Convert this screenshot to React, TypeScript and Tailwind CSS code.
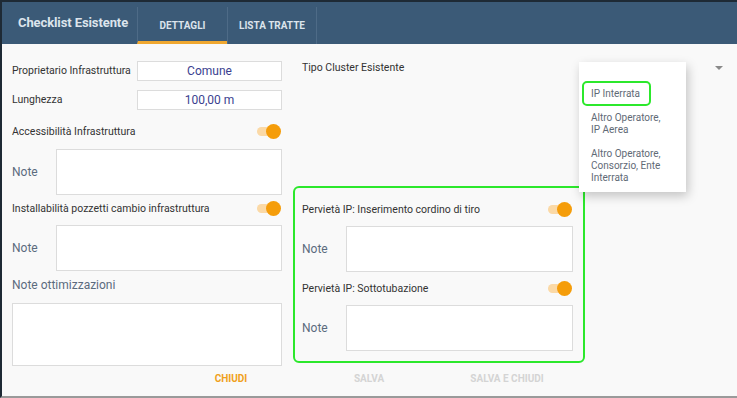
import React from 'react'

const font = { fontFamily: 'Roboto, "Liberation Sans", sans-serif' }

function Toggle() {
  return (
    <div className="relative w-[24px] h-[15px] flex items-center">
      <div className="w-[20px] h-[9px] rounded-full bg-[#fbd9a6]" />
      <div className="absolute right-0 top-0 w-[15px] h-[15px] rounded-full bg-[#f59d0a]" />
    </div>
  )
}

function NoteBox({ h = 'h-[46px]' }: { h?: string }) {
  return (
    <div className="flex items-center">
      <span className="w-[44px] text-[12px] text-[#5b6b7e]">Note</span>
      <div className={`flex-1 ${h} bg-white border-[1.5px] border-[#dcdcdc]`} />
    </div>
  )
}

function ToggleRow({ label }: { label: string }) {
  return (
    <div className="flex items-center justify-between h-[15px] pr-[1px]">
      <span className="text-[10.5px] text-[#333]">{label}</span>
      <Toggle />
    </div>
  )
}

function Field({ label, value }: { label: string; value: string }) {
  return (
    <div className="flex items-center h-[20px]">
      <span className="w-[125px] text-[10.5px] text-[#333]">{label}</span>
      <div className="w-[145px] h-[20px] bg-white border-[1.5px] border-[#dcdcdc] flex items-center justify-center text-[12px] text-[#3b3f8f]">
        {value}
      </div>
    </div>
  )
}

export default function App() {
  return (
    <div className="relative w-[737px] h-[398px] overflow-hidden bg-[#f9f9f9] border-t-2 border-l-2 border-b-2 border-t-[#1e2a35] border-l-[#1e2a35] border-b-[#9a9a9a]" style={font}>
      {/* Header */}
      <div className="h-[42px] bg-[#3b5a77] flex">
        <div className="w-[135px] flex items-center pl-[16px] text-[13px] font-bold text-[#dce4ec] whitespace-nowrap tracking-[-0.1px]">
          Checklist Esistente
        </div>
        <div className="flex items-stretch pt-[5px]">
          <div className="w-[90px] border-l border-[#4e6b87] flex items-center justify-center text-[10px] font-bold text-[#dce4ec] border-b-[3px] border-b-[#f0a830] pt-[3px]">
            DETTAGLI
          </div>
          <div className="w-[89px] border-l border-[#4e6b87] flex items-center justify-center text-[10px] font-bold text-[#dce4ec]">
            LISTA TRATTE
          </div>
          <div className="border-l border-[#4e6b87]" />
        </div>
      </div>

      {/* Body */}
      <div className="flex pl-[10px] pt-[17px]">
        {/* Left column */}
        <div className="w-[270px] flex flex-col">
          <Field label="Proprietario Infrastruttura" value="Comune" />
          <div className="h-[9px]" />
          <Field label="Lunghezza" value="100,00 m" />
          <div className="h-[14px]" />
          <ToggleRow label="Accessibilità Infrastruttura" />
          <div className="h-[10px]" />
          <NoteBox />
          <div className="h-[6px]" />
          <ToggleRow label="Installabilità pozzetti cambio infrastruttura" />
          <div className="h-[9px]" />
          <NoteBox />
          <div className="h-[7px]" />
          <div className="text-[12px] text-[#5b6b7e] h-[15px] leading-[15px]">Note ottimizzazioni</div>
          <div className="h-[10px]" />
          <div className="h-[63px] bg-white border-[1.5px] border-[#dcdcdc]" />
        </div>

        {/* Right column */}
        <div className="flex-1 pl-[11px] flex flex-col">
          <div className="flex items-center h-[16px] pl-[9px] pr-[14px] mt-[-1px]">
            <span className="text-[10.5px] text-[#333] flex-1">Tipo Cluster Esistente</span>
            <span className="w-0 h-0 border-l-[4px] border-r-[4px] border-t-[4px] border-l-transparent border-r-transparent border-t-[#8a8a8a]" />
          </div>
          <div className="h-[110px]" />
          <div className="w-[292px] h-[177px] border-[2.5px] border-[#2ce82c] rounded-[6px] pl-[7px] pr-[10px] pt-[14px] flex flex-col">
            <ToggleRow label="Pervietà IP: Inserimento cordino di tiro" />
            <div className="h-[9px]" />
            <NoteBox />
            <div className="h-[9px]" />
            <ToggleRow label="Pervietà IP: Sottotubazione" />
            <div className="h-[9px]" />
            <NoteBox />
          </div>
        </div>
      </div>

      {/* Footer */}
      <div className="flex pl-[160px] pt-[5px] text-[10px] font-bold">
        <div className="w-[138px] text-center text-[#f0a020]">CHIUDI</div>
        <div className="w-[138px] text-center text-[#d4d4d4]">SALVA</div>
        <div className="w-[138px] text-center text-[#d4d4d4]">SALVA E CHIUDI</div>
      </div>

      {/* Dropdown menu */}
      <div className="absolute left-[577px] top-[60px] w-[107px] h-[130px] bg-white shadow-[2px_4px_10px_rgba(0,0,0,0.22)] text-[10px] leading-[12px] text-[#5f6a76]">
        <div className="mt-[19px] ml-[3px] w-[69px] h-[25px] border-[2.5px] border-[#2ce82c] rounded-[5px] flex items-center pl-[7px]">
          IP Interrata
        </div>
        <div className="mt-[6px] pl-[12px]">
          Altro Operatore,
          <br />
          IP Aerea
        </div>
        <div className="mt-[12px] pl-[12px]">
          Altro Operatore,
          <br />
          Consorzio, Ente
          <br />
          Interrata
        </div>
      </div>
    </div>
  )
}
